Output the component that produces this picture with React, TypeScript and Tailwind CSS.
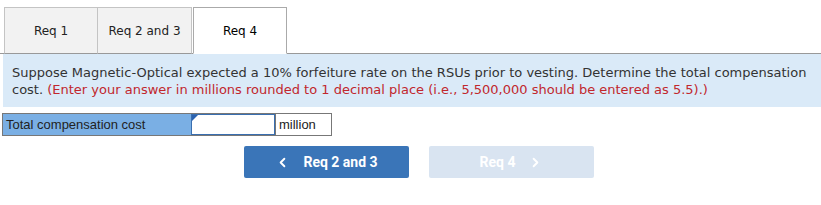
import { ChevronLeft, ChevronRight } from "lucide-react";

const TABS = [
  { key: "req1", label: "Req 1", width: "w-[94px]" },
  { key: "req23", label: "Req 2 and 3", width: "w-[95px]" },
  { key: "req4", label: "Req 4", width: "w-[94px]" },
];

export default function App() {
  const active = "req4";

  return (
    <div className="h-[205px] w-[821px] bg-white font-['DejaVu_Sans',Verdana,sans-serif] text-[13px] text-[#333]">
      <div className="flex items-end border-b border-[#999] pl-[4px] pt-[7px]">
        {TABS.map((tab) => (
          <div
            key={tab.key}
            className={`-mb-px flex h-[47px] items-center justify-center border text-[12px] ${tab.width} ${
              tab.key === active
                ? "ml-[2px] border-[#aaa] border-b-white bg-white text-black"
                : "mr-[-1px] border-[#c4c4c4] border-b-[#999] bg-[#f2f2f2] text-[#222]"
            }`}
          >
            {tab.label}
          </div>
        ))}
      </div>

      <div className="ml-[3px] bg-[#daeaf8] px-[9px] pb-[9px] pt-[11px] leading-[16.5px]">
        Suppose Magnetic-Optical expected a 10% forfeiture rate on the RSUs prior to vesting. Determine the total compensation cost.{" "}
        <span className="text-[#c1272d]">
          (Enter your answer in millions rounded to 1 decimal place (i.e., 5,500,000 should be entered as 5.5).)
        </span>
      </div>

      <div className="ml-[2px] mt-[6px] flex h-[23px] w-[330px] border border-[#777] font-['Liberation_Sans',Arial,sans-serif] text-[13px] text-[#222]">
        <div className="flex w-[188px] items-center bg-[#7aafe4] pl-[3px]">Total compensation cost</div>
        <div className="relative w-[84px] border border-[#3a6fb0] bg-white">
          <span className="absolute left-0 top-0 h-0 w-0 border-r-[6px] border-t-[6px] border-r-transparent border-t-[#2b62b0]" />
        </div>
        <div className="flex flex-1 items-center border-l border-[#777] bg-white pl-[3px]">million</div>
      </div>

      <div className="mt-[10px] flex gap-[20px] pl-[244px] font-['Roboto',Arial,sans-serif] text-[14px] font-bold">
        <div className="flex h-[32px] w-[165px] items-center justify-center gap-[13px] rounded-[2px] bg-[#3a75b8] text-white">
          <ChevronLeft className="h-[15px] w-[15px]" strokeWidth={3} />
          <span>Req 2 and 3</span>
        </div>
        <div className="flex h-[32px] w-[165px] items-center justify-center gap-[13px] rounded-[2px] bg-[#d9e4f1] text-white">
          <span>Req 4</span>
          <ChevronRight className="h-[15px] w-[15px]" strokeWidth={3} />
        </div>
      </div>
    </div>
  );
}
